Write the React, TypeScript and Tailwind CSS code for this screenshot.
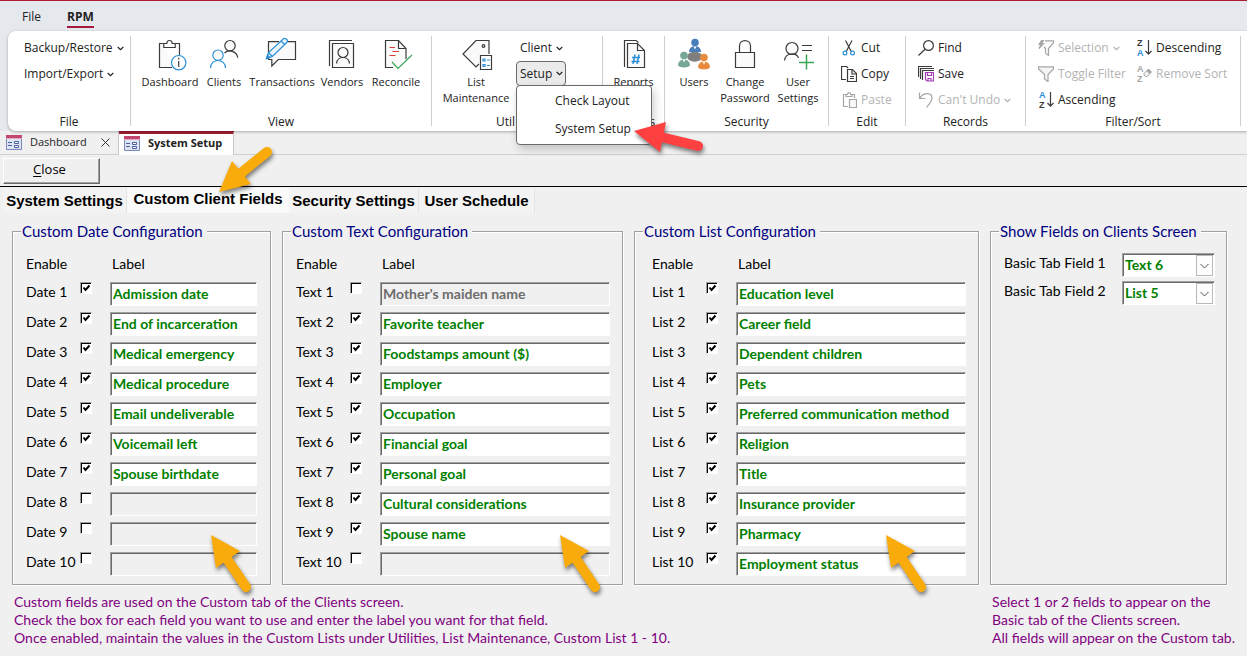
import React, { useState } from 'react';
import clsx from 'clsx';

interface FieldRow {
  label?: string;
  enabled: boolean;
}

const on = (label: string): FieldRow => ({ label, enabled: true });
const off = (label = ''): FieldRow => ({ label, enabled: false });

const dateFields: FieldRow[] = [
  on('Admission date'),
  on('End of incarceration'),
  on('Medical emergency'),
  on('Medical procedure'),
  on('Email undeliverable'),
  on('Voicemail left'),
  on('Spouse birthdate'),
  off(),
  off(),
  off(),
];

const textFields: FieldRow[] = [
  off("Mother's maiden name"),
  on('Favorite teacher'),
  on('Foodstamps amount ($)'),
  on('Employer'),
  on('Occupation'),
  on('Financial goal'),
  on('Personal goal'),
  on('Cultural considerations'),
  on('Spouse name'),
  off(),
];

const listFields: FieldRow[] = [
  on('Education level'),
  on('Career field'),
  on('Dependent children'),
  on('Pets'),
  on('Preferred communication method'),
  on('Religion'),
  on('Title'),
  on('Insurance provider'),
  on('Pharmacy'),
  on('Employment status'),
];

/* ---------- icons ---------- */

const BigIcon = ({ children }: { children: React.ReactNode }) => (
  <svg width="36" height="36" viewBox="0 0 36 36" fill="none" stroke="#3b3b3b" strokeWidth="1.2">
    {children}
  </svg>
);

const SmallIcon = ({ children, muted = false }: { children: React.ReactNode; muted?: boolean }) => (
  <svg width="16" height="16" viewBox="0 0 16 16" className="shrink-0" fill="none" stroke={muted ? '#a6a6a6' : '#3b3b3b'} strokeWidth="1.2">
    {children}
  </svg>
);

const Chevron = () => (
  <svg width="7" height="5" viewBox="0 0 7 5" fill="none" stroke="currentColor" strokeWidth="1.2">
    <path d="M.7 1l2.8 2.6L6.3 1" />
  </svg>
);

const DashboardIcon = () => (
  <BigIcon>
    <path d="M12 6.5H7.5v24H20M23 6.5h4.5V18" fill="#fafafa" />
    <path d="M11.8 10.5v-4h3c0-4 5.4-4 5.4 0h3v4z" fill="#fff" />
    <circle cx="26.7" cy="25.7" r="7.2" fill="#fff" stroke="#2b8fd6" />
    <path d="M26.7 24v6M26.7 20.8v1.6" />
  </BigIcon>
);

const ClientsIcon = () => (
  <BigIcon>
    <circle cx="24" cy="8.7" r="5.2" fill="#fafafa" />
    <path d="M18.5 16c4-4 12.5-2 13.2 4.8" />
    <circle cx="12" cy="18.2" r="5.2" fill="#fafafa" stroke="#2b8fd6" />
    <path d="M4.5 31c0-10 15-10 15 0" stroke="#2b8fd6" />
  </BigIcon>
);

const TransactionsIcon = () => (
  <BigIcon>
    <path d="M15 4.700H4.500v17.800h3.300v6.500l6.500-6.500h17.200V4.700H23" fill="#fafafa" />
    <path d="M2.500 21.500l2-6L19.500 1.800c2-1.500 5 1.400 3.500 3.500L8.300 19.500z" fill="#eaf4fb" stroke="#2b8fd6" />
    <path d="M17 4l3.800 3.700M4.500 15.500l3.800 4" stroke="#2b8fd6" />
    <path d="M2.500 21.500l1-3.300 2.300 2.300z" fill="#2b8fd6" stroke="#2b8fd6" />
  </BigIcon>
);

const VendorsIcon = () => (
  <BigIcon>
    <path d="M5.500 29V3.500H28" />
    <path d="M8.500 6.500h21v24h-21z" fill="#fafafa" />
    <circle cx="19" cy="15.500" r="5" />
    <path d="M12.500 26.500c1-8 12-8 13 0" />
  </BigIcon>
);

const ReconcileIcon = () => (
  <BigIcon>
    <path d="M15 30.500H7.500v-27h13l7.500 8V22" fill="#fafafa" />
    <path d="M20.500 3.500v8H28" />
    <path d="M11.500 10.500H17M14.500 14.500H21M11.500 18.500h6" stroke="#e23b3b" />
    <path d="M14 25l6 6.500L34 18" stroke="#3aa655" />
  </BigIcon>
);

const ListMaintenanceIcon = () => (
  <BigIcon>
    <path d="M31 17V3.500H18L5 17l13 13 3-3" fill="#fafafa" />
    <circle cx="25.500" cy="9" r="1.300" />
    <path d="M22.500 18.500h11v14h-11z" fill="#fff" />
    <path d="M25 22h2v2h-2zM25 27.500h2v2h-2zM29 23h3M29 28.500h3" stroke="#2b8fd6" />
  </BigIcon>
);

const ReportsIcon = () => (
  <BigIcon>
    <path d="M8.500 30V3.500H20l2.500 2" />
    <path d="M11.500 6.500h10l7 7v17h-17z" fill="#fafafa" />
    <path d="M21.500 6.500v7h7" />
    <path d="M19 17.500l-2 9.500M23 17.500l-2 9.500M16 20.500h8M15.500 24.500h8" stroke="#2b8fd6" strokeWidth="1.500" />
  </BigIcon>
);

const UsersIcon = () => (
  <BigIcon>
    <g stroke="none">
      <ellipse cx="18.700" cy="19.700" rx="7.500" ry="5" fill="#7f7f7f" />
      <circle cx="19" cy="5.500" r="3.800" fill="#4a7ebb" />
      <path d="M13 15c0-8 12-8 12 0z" fill="#4a7ebb" />
      <path d="M17.500 9.500l1.500 3 1.500-3z" fill="#fff" />
      <circle cx="8" cy="18.500" r="3.800" fill="#76a797" />
      <path d="M2 28.500c0-8 12-8 12 0-2 2.500-10 2.500-12 0z" fill="#76a797" />
      <path d="M6.500 22.500l1.500 3 1.500-3z" fill="#fff" />
      <circle cx="28" cy="20.500" r="3.800" fill="#e98b3e" />
      <path d="M22 30.500c0-8 12-8 12 0-2 2.500-10 2.500-12 0z" fill="#e98b3e" />
      <path d="M26.500 24.500l1.500 3 1.500-3z" fill="#fff" />
    </g>
  </BigIcon>
);

const LockIcon = () => (
  <BigIcon>
    <path d="M8.500 15.500h19v15h-19z" fill="#fafafa" />
    <path d="M12.500 15.500V9c0-7.300 11-7.300 11 0v6.500" />
  </BigIcon>
);

const UserSettingsIcon = () => (
  <BigIcon>
    <circle cx="12" cy="11.500" r="6" fill="#fafafa" />
    <path d="M4.500 23.500c1-8.500 12-8 14-2.500M22 8.500h10M22 13.500h10" />
    <path d="M26.500 17.500v15M19 25.500h15" stroke="#3aa655" strokeWidth="1.500" />
  </BigIcon>
);

const CutIcon = () => (
  <SmallIcon>
    <path d="M4.500.5l5.800 11M11 .5L5.200 11.500" />
    <circle cx="4" cy="13" r="1.900" stroke="#2b8fd6" />
    <circle cx="11.500" cy="13" r="1.900" stroke="#2b8fd6" />
  </SmallIcon>
);

const CopyIcon = () => (
  <SmallIcon>
    <path d="M5 13.500H.5V.5h5l1.500 1.500" />
    <path d="M6.500 3.500h5l4 4v8h-9z" fill="#fafafa" />
    <path d="M11 3.500V8h4.500M9 10.500h4M9 12.500h4" />
  </SmallIcon>
);

const PasteIcon = () => (
  <SmallIcon muted>
    <path d="M7 14.500H2.500V2.500H5M11 2.500h2.500V6M5 4.500v-2h1.500c0-2.500 3-2.500 3 0H11v2z" />
    <path d="M8.500 7.500h7v8h-7z" fill="#fafafa" />
  </SmallIcon>
);

const FindIcon = () => (
  <SmallIcon>
    <circle cx="10.500" cy="5.500" r="4.900" />
    <path d="M7 9.200L.5 15.500" />
  </SmallIcon>
);

const SaveIcon = () => (
  <SmallIcon>
    <path d="M.5 11V.5H14M2.500 13V2.500H16M5 13.500h-.5V4.500H16" />
    <path d="M7.500 6.500h8v8.500h-6.500l-1.500-1.500z" fill="#fff" stroke="#a23fb5" />
    <path d="M9.500 6.500v3h4v-3M10 15v-2.500h3V15" stroke="#a23fb5" />
  </SmallIcon>
);

const UndoIcon = () => (
  <SmallIcon muted>
    <path d="M1.500.5v6h6M1.800 6.300C6-.5 14 .5 14 6c0 3-2 5-5.500 9.500" />
  </SmallIcon>
);

const SelectionIcon = () => (
  <SmallIcon muted>
    <path d="M7 .8h8.500v2L10.500 8.500v7L7.500 13V8.500L6 7" fill="#fafafa" />
    <path d="M3.500.5L1 4.500h2L1 8.500l4.500-5h-2l2-3z" fill="#a6a6a6" />
  </SmallIcon>
);

const FunnelIcon = () => (
  <SmallIcon muted>
    <path d="M.5.8h15v2L10 8.500v7L6.500 13V8.500L.5 2.800z" fill="#f4f4f4" />
  </SmallIcon>
);

const letter = 'font-["Liberation_Sans",sans-serif] text-[9px] font-bold';

const SortIcon = ({ top, bottom }: { top: string; bottom: string }) => (
  <svg width="16" height="22" viewBox="0 0 16 22" className="shrink-0">
    <text x="1" y="9" className={letter} fill={top === 'A' ? '#2b8fd6' : '#3b3b3b'}>{top}</text>
    <text x="1" y="19" className={letter} fill={bottom === 'A' ? '#2b8fd6' : '#3b3b3b'}>{bottom}</text>
    <path d="M12.500 3v14M9.500 14l3 3.200 3-3.200" fill="none" stroke="#3b3b3b" strokeWidth="1.200" />
  </svg>
);

const RemoveSortIcon = () => (
  <svg width="16" height="22" viewBox="0 0 16 22" className="shrink-0" fill="#a6a6a6">
    <text x="1" y="9" className={letter}>A</text>
    <text x="1" y="19" className={letter}>Z</text>
    <path d="M8 10.500L12.500 6l3 3L11 13.500H9.500L8 12z" fill="#f4f4f4" stroke="#a6a6a6" />
    <path d="M10.500 8l3 3 2-2-3-3z" />
  </svg>
);

const FormIcon = () => (
  <svg width="16" height="15" viewBox="0 0 16 15" className="shrink-0">
    <path d="M.5.5h15v14H.5z" fill="#dde5f5" stroke="#7a87b8" />
    <path d="M0 0h16v4H0z" fill="#c2476f" />
    <path d="M0 3h16v1H0z" fill="#e7a9bf" />
    <path d="M2 7.500h4M2 10.500h4" stroke="#4a5f9e" />
    <path d="M8.500 6.500h4v2h-4zM8.500 10.500h4v2h-4z" fill="#fff" stroke="#4a5f9e" />
  </svg>
);

/* ---------- callout arrows ---------- */

const FieldArrow = ({ className }: { className: string }) => (
  <svg width="52" height="66" viewBox="0 0 52 66" className={clsx('absolute drop-shadow-[1px_3px_2px_rgba(0,0,0,0.5)]', className)}>
    <path d="M6 5l29 16-24 17z" fill="#f9ab0b" />
    <path d="M20 26l21 31" stroke="#f9ab0b" strokeWidth="10" strokeLinecap="round" />
  </svg>
);

/* ---------- ribbon ---------- */

const Group = ({ title, className, children }: { title: string; className: string; children: React.ReactNode }) => (
  <>
    <section className={clsx('flex shrink-0 flex-col justify-between pt-1 pb-px', className)}>
      <div className="flex">{children}</div>
      <h2 className="text-center leading-4">{title}</h2>
    </section>
    <div className="my-[5px] w-px shrink-0 bg-[#cfcfcf]" />
  </>
);

const BigButton = ({ icon, className, children }: { icon: React.ReactNode; className: string; children: React.ReactNode }) => (
  <button className={clsx('flex shrink-0 flex-col items-center pt-[2px] text-[11px] leading-4', className)}>
    {icon}
    <span className="pt-px">{children}</span>
  </button>
);

interface SmallButtonProps {
  icon?: React.ReactNode;
  label: string;
  menu?: boolean;
  disabled?: boolean;
}

const SmallButton = ({ icon, label, menu, disabled }: SmallButtonProps) => (
  <button disabled={disabled} className="flex h-[26px] items-center gap-1 whitespace-nowrap disabled:text-[#b3b3b3]">
    {icon}
    {label}
    {menu && <Chevron />}
  </button>
);

const Ribbon = () => (
  <div className="relative z-10 ml-2 flex h-[100px] rounded-l-lg bg-white shadow-[0_1px_3px_rgba(0,0,0,0.3)]">
    <Group title="File" className="w-[122px]">
      <div className="flex flex-col pl-4">
        <SmallButton label="Backup/Restore" menu />
        <SmallButton label="Import/Export" menu />
      </div>
    </Group>
    <Group title="View" className="w-[300px]">
      <div className="flex pl-[7px]">
        <BigButton icon={<DashboardIcon />} className="w-16">Dashboard</BigButton>
        <BigButton icon={<ClientsIcon />} className="w-11">Clients</BigButton>
        <BigButton icon={<TransactionsIcon />} className="w-[72px]">Transactions</BigButton>
        <BigButton icon={<VendorsIcon />} className="w-12">Vendors</BigButton>
        <BigButton icon={<ReconcileIcon />} className="w-[60px]">Reconcile</BigButton>
      </div>
    </Group>
    <Group title="Utilities" className="w-[170px]">
      <div className="flex pl-2">
        <BigButton icon={<ListMaintenanceIcon />} className="w-[72px]">List<br />Maintenance</BigButton>
        <div className="flex flex-col items-start pl-1">
          <div className="pl-1">
            <SmallButton label="Client" menu />
          </div>
          <div className="relative">
            <button aria-expanded="true" className="flex h-[25px] w-[50px] items-center gap-1 rounded border border-[#6b6b6b] bg-[#ebebeb] pl-[3px]">
              Setup
              <Chevron />
            </button>
            <ul role="menu" className="absolute top-6 left-0 w-[136px] rounded border border-[#6b6b6b] bg-white pt-px pb-px shadow-[2px_4px_10px_rgba(0,0,0,0.2)]">
              <li><button role="menuitem" className="h-7 w-full pl-[38px] text-left">Check Layout</button></li>
              <li><button role="menuitem" className="h-7 w-full pl-[38px] text-left">System Setup</button></li>
            </ul>
            <svg width="80" height="44" viewBox="0 0 80 44" className="absolute top-[58px] left-[113px] drop-shadow-[1px_3px_2px_rgba(0,0,0,0.5)]">
              <path d="M5 12l32-9-6 30z" fill="#ff4040" />
              <path d="M32 18l37 9" stroke="#ff4040" strokeWidth="10" strokeLinecap="round" />
            </svg>
          </div>
        </div>
      </div>
    </Group>
    <Group title="Reports" className="w-[61px]">
      <BigButton icon={<ReportsIcon />} className="w-full">Reports</BigButton>
    </Group>
    <Group title="Security" className="w-[163px]">
      <div className="flex pl-[5px]">
        <BigButton icon={<UsersIcon />} className="w-12">Users</BigButton>
        <BigButton icon={<LockIcon />} className="w-[54px]">Change<br />Password</BigButton>
        <BigButton icon={<UserSettingsIcon />} className="w-[52px]">User<br />Settings</BigButton>
      </div>
    </Group>
    <Group title="Edit" className="w-[76px]">
      <div className="flex flex-col pl-3">
        <SmallButton icon={<CutIcon />} label="Cut" />
        <SmallButton icon={<CopyIcon />} label="Copy" />
        <SmallButton icon={<PasteIcon />} label="Paste" disabled />
      </div>
    </Group>
    <Group title="Records" className="w-[119px]">
      <div className="flex flex-col pl-3">
        <SmallButton icon={<FindIcon />} label="Find" />
        <SmallButton icon={<SaveIcon />} label="Save" />
        <SmallButton icon={<UndoIcon />} label="Can't Undo" menu disabled />
      </div>
    </Group>
    <Group title="Filter/Sort" className="w-[214px]">
      <div className="flex w-[110px] flex-col pl-3">
        <SmallButton icon={<SelectionIcon />} label="Selection" menu disabled />
        <SmallButton icon={<FunnelIcon />} label="Toggle Filter" disabled />
        <SmallButton icon={<SortIcon top="A" bottom="Z" />} label="Ascending" />
      </div>
      <div className="flex flex-col">
        <SmallButton icon={<SortIcon top="Z" bottom="A" />} label="Descending" />
        <SmallButton icon={<RemoveSortIcon />} label="Remove Sort" disabled />
      </div>
    </Group>
  </div>
);

/* ---------- form ---------- */

const sunken = 'border border-t-[#a0a0a0] border-l-[#a0a0a0] border-r-white border-b-white';

const Panel = ({ title, className, children }: { title: string; className?: string; children: React.ReactNode }) => (
  <fieldset className="relative min-w-0 border border-[#a0a0a0] pb-[3px] shadow-[1px_1px_0_#fff,inset_1px_1px_0_#fff]">
    <legend className="ml-2 bg-[#f0f0f0] pr-1 pl-px text-[15px] leading-[22px] text-[#000080]">{title}</legend>
    <div className={className}>{children}</div>
  </fieldset>
);

const CheckBox = ({ id, checked, onChange }: { id: string; checked: boolean; onChange: () => void }) => (
  <span className="mt-px grid size-3 shrink-0 border border-t-[#a0a0a0] border-l-[#a0a0a0] border-r-white border-b-white">
    <input
      id={id}
      type="checkbox"
      checked={checked}
      onChange={onChange}
      className="peer col-start-1 row-start-1 size-[10px] appearance-none border-t border-l border-black bg-white"
    />
    <svg viewBox="0 0 10 10" className="pointer-events-none col-start-1 row-start-1 hidden size-[10px] peer-checked:block">
      <path d="M2.500 4.500l2 2.500 4-4.500" fill="none" stroke="#000" strokeWidth="2" />
    </svg>
  </span>
);

const FieldPanel = ({ title, kind, rows, arrow, className }: { title: string; kind: string; rows: FieldRow[]; arrow: string; className: string }) => {
  const [fields, setFields] = useState(rows);

  const update = (index: number, patch: Partial<FieldRow>) =>
    setFields((prev) => prev.map((f, i) => (i === index ? { ...f, ...patch } : f)));

  return (
    <Panel title={title} className={className}>
      <div className="flex h-[39px] items-center pt-1 leading-5">
        <span className="w-[86px]">Enable</span>
        <span>Label</span>
      </div>
      {fields.map((field, i) => {
        const id = `${kind.toLowerCase()}-${i + 1}`;
        return (
          <div key={id} className="flex h-[30px] items-start">
            <label htmlFor={id} className="w-[54px] shrink-0 leading-[22px] whitespace-nowrap">{kind} {i + 1}</label>
            <CheckBox id={id} checked={field.enabled} onChange={() => update(i, { enabled: !field.enabled })} />
            <input
              aria-label={`${kind} ${i + 1} label`}
              value={field.label}
              disabled={!field.enabled}
              onChange={(e) => update(i, { label: e.target.value })}
              className={clsx(
                sunken,
                'mt-px ml-[18px] h-6 min-w-0 flex-1 bg-white pb-[2px] pl-[2px] font-bold text-[#008000] shadow-[inset_1px_1px_0_#696969]',
                'disabled:bg-[#f0f0f0] disabled:text-[#6d6d6d]'
              )}
            />
          </div>
        );
      })}
      <FieldArrow className={arrow} />
    </Panel>
  );
};

const BasicField = ({ id, label, value }: { id: string; label: string; value: string }) => (
  <div className="flex h-7 items-start">
    <label htmlFor={id} className="w-[118px] shrink-0 leading-[22px]">{label}</label>
    <div className={clsx(sunken, 'mt-px grid h-6 min-w-0 flex-1 bg-white shadow-[inset_1px_1px_0_#696969]')}>
      <select id={id} defaultValue={value} className="col-start-1 row-start-1 w-full appearance-none bg-transparent pb-[2px] pl-[2px] font-bold text-[#008000]">
        <option>{value}</option>
      </select>
      <span className="pointer-events-none col-start-1 row-start-1 m-px flex w-[17px] items-center justify-center justify-self-end border border-[#b8b8b8] bg-[#fdfdfd]">
        <svg width="9" height="6" viewBox="0 0 9 6" fill="none" stroke="#555">
          <path d="M.5 1l4 4 4-4" />
        </svg>
      </span>
    </div>
  </div>
);

const pageTab = 'h-6 border-r border-[#e2e2e2] bg-[#f3f3f3] whitespace-nowrap';

export default function App() {
  return (
    <div className='min-h-screen bg-[#f0f0f0] font-["Open_Sans","Noto_Sans",sans-serif] text-[12px] text-[#222]'>
      <header className="bg-[#e5e8ed]">
        <nav className="flex h-[31px] gap-[26px] border-t border-[#b01c34] pl-[22px]">
          <button className="self-start pt-2 leading-4">File</button>
          <button className="self-start border-b-2 border-[#a4193d] pt-2 pb-px leading-4 font-bold">RPM</button>
        </nav>
        <Ribbon />
        <div className="flex h-6 items-stretch border-b border-[#d0d0d0] bg-[#f0f0f0] text-[11px]" role="tablist">
          <div className="flex w-[119px] items-center border-r border-[#c8c8c8] pl-[6px]">
            <FormIcon />
            <button role="tab" className="pl-2">Dashboard</button>
            <button aria-label="Close Dashboard" className="ml-auto pr-2">
              <svg width="9" height="9" viewBox="0 0 9 9" stroke="#333"><path d="M.5.500l8 8M8.500.5l-8 8" /></svg>
            </button>
          </div>
          <div className="-mb-px flex w-[115px] items-center border-t-3 border-r border-t-[#a41e32] border-r-[#c8c8c8] bg-white pb-[2px] pl-[5px]">
            <FormIcon />
            <button role="tab" aria-selected="true" className="pl-2 font-bold whitespace-nowrap">System Setup</button>
          </div>
        </div>
      </header>

      <main className='font-["Lato",sans-serif] text-[14px] text-black'>
        <div className="flex h-8 items-start border-b border-black px-[3px] pt-[3px]">
          <button className='h-[26px] w-[97px] border border-t-white border-r-[#696969] border-b-[#696969] border-l-white pr-1 pb-[2px] font-["Open_Sans",sans-serif] text-[13px] shadow-[inset_-1px_-1px_0_#a0a0a0]'>
            <span className="underline underline-offset-2">C</span>lose
          </button>
        </div>

        <div role="tablist" className='flex items-end pt-px pl-[3px] font-["Liberation_Sans",Arial,sans-serif] text-[15px] font-bold'>
          <button role="tab" className={clsx(pageTab, 'w-[124px]')}>System Settings</button>
          <div className="relative flex">
            <button role="tab" aria-selected="true" className="h-[25px] w-[162px] bg-[#fafafa] pb-1 whitespace-nowrap">Custom Client Fields</button>
            <svg width="64" height="56" viewBox="0 0 64 56" className="absolute -top-11 left-[85px] drop-shadow-[1px_3px_2px_rgba(0,0,0,0.5)]">
              <path d="M7 48l13-31 19 23z" fill="#f9ab0b" />
              <path d="M28 30L55 8" stroke="#f9ab0b" strokeWidth="10" strokeLinecap="round" />
            </svg>
          </div>
          <button role="tab" className={clsx(pageTab, 'w-[130px]')}>Security Settings</button>
          <button role="tab" className={clsx(pageTab, 'w-[116px]')}>User Schedule</button>
        </div>

        <div className="grid grid-cols-[259fr_341fr_345fr_237fr] gap-x-[11px] pt-[7px] pr-5 pl-3">
          <FieldPanel title="Custom Date Configuration" kind="Date" rows={dateFields} className="px-[13px]" arrow="right-[13px] -bottom-3" />
          <FieldPanel title="Custom Text Configuration" kind="Text" rows={textFields} className="pr-3 pl-[13px]" arrow="right-4 -bottom-3" />
          <FieldPanel title="Custom List Configuration" kind="List" rows={listFields} className="pr-3 pl-[17px]" arrow="right-[46px] -bottom-3" />
          <Panel title="Show Fields on Clients Screen" className="pt-[10px] pr-[11px] pl-[13px]">
            <BasicField id="basic-1" label="Basic Tab Field 1" value="Text 6" />
            <BasicField id="basic-2" label="Basic Tab Field 2" value="List 5" />
          </Panel>
        </div>

        <footer className="flex justify-between pt-2 pr-3 pl-[14px] leading-[18px] text-[#800080]">
          <p>
            Custom fields are used on the Custom tab of the Clients screen.<br />
            Check the box for each field you want to use and enter the label you want for that field.<br />
            Once enabled, maintain the values in the Custom Lists under Utilities, List Maintenance, Custom List 1 - 10.
          </p>
          <p>
            Select 1 or 2 fields to appear on the<br />
            Basic tab of the Clients screen.<br />
            All fields will appear on the Custom tab.
          </p>
        </footer>
      </main>
    </div>
  );
}
